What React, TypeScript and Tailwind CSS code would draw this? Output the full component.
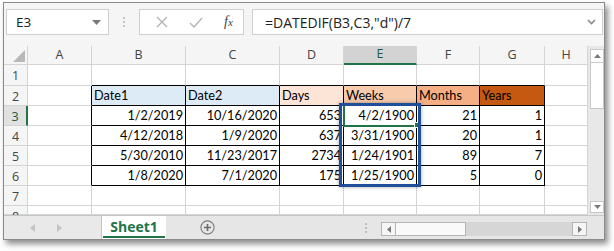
import React from "react";

const COLS = [
  { k: "A", w: "w-[64px]" },
  { k: "B", w: "w-[94px]" },
  { k: "C", w: "w-[94px]" },
  { k: "D", w: "w-[64px]" },
  { k: "E", w: "w-[73px]" },
  { k: "F", w: "w-[63px]" },
  { k: "G", w: "w-[65px]" },
  { k: "H", w: "w-[43px]" },
];

type C = { t?: string; bg?: string; left?: boolean; white?: boolean };

const ROWS: { n: string; h: string; cells: Record<string, C> }[] = [
  { n: "1", h: "h-[21px]", cells: {} },
  {
    n: "2",
    h: "h-[20px]",
    cells: {
      B: { t: "Date1", bg: "bg-[#ddebf7]", left: true },
      C: { t: "Date2", bg: "bg-[#ddebf7]", left: true },
      D: { t: "Days", bg: "bg-[#fce4d6]", left: true },
      E: { t: "Weeks", bg: "bg-[#f8cbad]", left: true },
      F: { t: "Months", bg: "bg-[#f4b084]", left: true },
      G: { t: "Years", bg: "bg-[#c65911]", left: true },
    },
  },
  { n: "3", h: "h-[20px]", cells: { B: { t: "1/2/2019" }, C: { t: "10/16/2020" }, D: { t: "653" }, E: { t: "4/2/1900" }, F: { t: "21" }, G: { t: "1" } } },
  { n: "4", h: "h-[20px]", cells: { B: { t: "4/12/2018" }, C: { t: "1/9/2020" }, D: { t: "637" }, E: { t: "3/31/1900" }, F: { t: "20" }, G: { t: "1" } } },
  { n: "5", h: "h-[20px]", cells: { B: { t: "5/30/2010" }, C: { t: "11/23/2017" }, D: { t: "2734" }, E: { t: "1/24/1901" }, F: { t: "89" }, G: { t: "7" } } },
  { n: "6", h: "h-[20px]", cells: { B: { t: "1/8/2020" }, C: { t: "7/1/2020" }, D: { t: "175" }, E: { t: "1/25/1900" }, F: { t: "5" }, G: { t: "0" } } },
  { n: "7", h: "h-[20px]", cells: {} },
  { n: "8", h: "h-[9px]", cells: {} },
];

const TABLE_COLS = ["B", "C", "D", "E", "F", "G"];

function cellBorders(rowIdx: number, col: string) {
  const r = rowIdx + 1;
  const inRows = r >= 2 && r <= 6;
  const rightBlack = inRows && ["A", "B", "C", "D", "E", "F", "G"].includes(col);
  const bottomBlack = r >= 1 && r <= 6 && TABLE_COLS.includes(col);
  return `${rightBlack ? "border-r-black" : "border-r-[#d4d4d4]"} ${bottomBlack ? "border-b-black" : "border-b-[#d4d4d4]"}`;
}

export default function App() {
  return (
    <div className="w-[614px] h-[251px] bg-white overflow-hidden pt-[2px] pl-[3px]">
      <div className="w-[602px] h-[238px] border border-[#8a8a8a] bg-[#f5f5f5] shadow-[3px_4px_6px_rgba(0,0,0,0.45)] flex flex-col">
        {/* formula bar */}
        <div className="h-[43px] flex items-start pt-[6px] shrink-0">
          <div className="ml-[2px] w-[103px] h-[26px] bg-white border border-[#d0d0d0] flex items-center justify-between pl-[9px] pr-[7px]">
            <span className="text-[13.5px] text-[#222] font-['Open_Sans',sans-serif]">E3</span>
            <svg width="9" height="5" viewBox="0 0 9 5"><path d="M0 0h9L4.5 5z" fill="#7a7a7a" /></svg>
          </div>
          <div className="w-[30px] h-[26px] flex flex-col items-center justify-center gap-[2px]">
            <div className="w-[2px] h-[2px] bg-[#c4c4c4]" />
            <div className="w-[2px] h-[2px] bg-[#c4c4c4]" />
            <div className="w-[2px] h-[2px] bg-[#c4c4c4]" />
          </div>
          <div className="w-[105px] h-[26px] bg-white border border-[#d0d0d0] flex items-center">
            <svg className="ml-[16px]" width="12" height="12" viewBox="0 0 12 12"><path d="M1 1L11 11M11 1L1 11" stroke="#b4b4b4" strokeWidth="1.4" /></svg>
            <svg className="ml-[21px]" width="14" height="11" viewBox="0 0 14 11"><path d="M1 6l4 4L13 1" stroke="#b4b4b4" strokeWidth="1.4" fill="none" /></svg>
            <span className="ml-[21px] text-[14px] italic text-[#444] font-['Liberation_Serif',serif] leading-none">f<span className="text-[11px]">x</span></span>
          </div>
          <div className="ml-[8px] w-[351px] h-[26px] bg-white border border-[#d0d0d0] flex items-center justify-between pl-[12px] pr-[6px]">
            <span className="text-[14px] text-[#222] font-['Open_Sans',sans-serif] whitespace-nowrap">=DATEDIF(B3,C3,"d")/7</span>
            <svg width="9" height="6" viewBox="0 0 9 6"><path d="M1 1l3.5 3.5L8 1" stroke="#8a8a8a" strokeWidth="1.6" fill="none" /></svg>
          </div>
        </div>

        {/* grid + vertical scrollbar */}
        <div className="h-[169px] flex shrink-0">
          <div className="relative w-[584px] bg-white">
            {/* header row */}
            <div className="flex h-[19px] bg-[#f5f5f5]">
              <div className="w-[24px] h-full border-r border-b border-[#d4d4d4] flex items-end justify-end pr-[2px] pb-[2px]">
                <svg width="12" height="12" viewBox="0 0 12 12"><path d="M12 0V12H0z" fill="#b9b9b9" /></svg>
              </div>
              {COLS.map((c) => (
                <div
                  key={c.k}
                  className={`${c.w} h-full border-r border-[#d4d4d4] flex items-center justify-center text-[12.5px] font-['Open_Sans',sans-serif] ${
                    c.k === "E" ? "bg-[#d3d3d3] border-b-2 border-b-[#217346] text-[#1e5c3a]" : "border-b text-[#444]"
                  }`}
                >
                  {c.k}
                </div>
              ))}
            </div>
            {ROWS.map((row, ri) => (
              <div key={row.n} className={`flex ${row.h} overflow-hidden`}>
                <div
                  className={`w-[24px] shrink-0 border-b border-[#d4d4d4] flex items-start justify-center pt-[2px] text-[12.5px] font-['Open_Sans',sans-serif] ${
                    row.n === "3" ? "bg-[#e1e1e1] border-r-2 border-r-[#217346] text-[#1e5c3a]" : "bg-[#f5f5f5] border-r text-[#444]"
                  }`}
                >
                  {row.n}
                </div>
                {COLS.map((c) => {
                  const cell = row.cells[c.k] || {};
                  return (
                    <div
                      key={c.k}
                      className={`${c.w} shrink-0 h-full border-r border-b ${cellBorders(ri, c.k)} ${cell.bg || ""} flex items-end ${
                        cell.left ? "justify-start pl-[2px]" : "justify-end pr-[2px]"
                      } pb-[1px] overflow-hidden`}
                    >
                      {cell.t && (
                        <span className="text-[12.7px] leading-[17px] text-black font-['Lato',sans-serif] whitespace-nowrap">{cell.t}</span>
                      )}
                    </div>
                  );
                })}
              </div>
            ))}
            {/* active cell */}
            <div className="absolute left-[339px] top-[58px] w-[78px] h-[23px] border-2 border-[#217346]" />
            <div className="absolute left-[410px] top-[76px] w-[6px] h-[6px] bg-[#217346] border border-white" />
            {/* blue annotation box */}
            <div className="absolute left-[335px] top-[57px] w-[82px] h-[84px] border-[3px] border-[#1f4e9b] shadow-[0_0_4px_rgba(0,0,0,0.35)]" />
          </div>
          <div className="w-[16px] bg-[#e8e8e8] flex flex-col pl-[2px] pt-[3px]">
            <div className="w-[14px] h-[14px] bg-white border border-[#c8c8c8] flex items-center justify-center">
              <svg width="7" height="4" viewBox="0 0 7 4"><path d="M0 4h7L3.5 0z" fill="#7a7a7a" /></svg>
            </div>
            <div className="w-[14px] h-[46px] bg-white border border-[#c8c8c8] border-t-0" />
            <div className="flex-1" />
            <div className="w-[14px] h-[12px] mb-[2px] bg-white border border-[#c8c8c8] flex items-center justify-center">
              <svg width="7" height="4" viewBox="0 0 7 4"><path d="M0 0h7L3.5 4z" fill="#7a7a7a" /></svg>
            </div>
          </div>
        </div>

        {/* tab bar */}
        <div className="h-[24px] flex border-t border-[#c6c6c6] bg-[#e6e6e6] shrink-0">
          <div className="w-[98px] h-full bg-[#e9e9e9] border-r border-[#c6c6c6] flex items-center pl-[26px] gap-[22px]">
            <svg width="5" height="8" viewBox="0 0 5 8"><path d="M5 0V8L0 4z" fill="#c4c4c4" /></svg>
            <svg width="5" height="8" viewBox="0 0 5 8"><path d="M0 0V8L5 4z" fill="#c4c4c4" /></svg>
          </div>
          <div className="w-[64px] h-full bg-white flex flex-col items-center">
            <span className="mt-[2px] text-[14px] font-bold text-[#217346] font-['Open_Sans',sans-serif] leading-[18px]">Sheet1</span>
            <div className="mt-auto mb-[1px] w-[62px] h-[2px] bg-[#217346]" />
          </div>
          <div className="w-[82px] flex items-center justify-center">
            <svg width="15" height="15" viewBox="0 0 15 15">
              <circle cx="7.5" cy="7.5" r="6.6" stroke="#7a7a7a" strokeWidth="1.1" fill="none" />
              <path d="M7.5 4v7M4 7.5h7" stroke="#6a6a6a" strokeWidth="1.6" />
            </svg>
          </div>
          <div className="w-[133px] flex items-center justify-end pr-[14px]">
            <div className="flex flex-col gap-[2px]">
              <div className="w-[2px] h-[2px] bg-[#bcbcbc]" />
              <div className="w-[2px] h-[2px] bg-[#bcbcbc]" />
              <div className="w-[2px] h-[2px] bg-[#bcbcbc]" />
            </div>
          </div>
          <div className="w-[206px] h-[14px] mt-[6px] flex bg-[#d6d6d6]">
            <div className="w-[15px] h-full bg-[#f5f5f5] border border-[#b5b5b5] flex items-center justify-center">
              <svg width="4" height="7" viewBox="0 0 4 7"><path d="M4 0V7L0 3.5z" fill="#7a7a7a" /></svg>
            </div>
            <div className="w-[70px] h-full bg-[#f9f9f9] border border-[#b5b5b5] border-l-0" />
            <div className="flex-1" />
            <div className="w-[15px] h-full bg-[#f5f5f5] border border-[#b5b5b5] flex items-center justify-center">
              <svg width="4" height="7" viewBox="0 0 4 7"><path d="M0 0V7L4 3.5z" fill="#7a7a7a" /></svg>
            </div>
          </div>
        </div>
      </div>
    </div>
  );
}
